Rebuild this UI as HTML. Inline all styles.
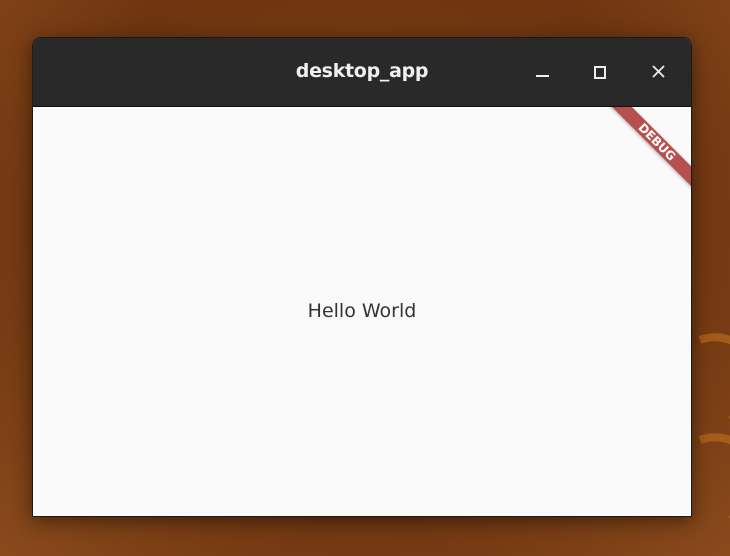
<!DOCTYPE html>
<html><head><meta charset="utf-8"><style>
html,body{margin:0;padding:0;width:730px;height:556px;overflow:hidden;}
body{background:radial-gradient(ellipse at 50% 40%,#7a3d12 0%,#6e3510 60%,#8a4a1c 100%);position:relative;font-family:"Liberation Sans","DejaVu Sans",sans-serif;}
.win{position:absolute;left:32px;top:37px;width:660px;height:480px;border-radius:9px 9px 0 0;box-shadow:0 4px 18px rgba(0,0,0,0.45);overflow:hidden;background:#fafafa;border:1px solid #1a1a1a;box-sizing:border-box;}
.tb{position:absolute;left:0;top:0;width:100%;height:68px;background:#292929;border-bottom:1px solid #111;}
.title{position:absolute;left:0;right:0;top:22px;text-align:center;color:#f0f0f0;font-weight:bold;font-size:19px;font-family:"DejaVu Sans","Liberation Sans",sans-serif;letter-spacing:-0.3px;}
.content{position:absolute;left:0;top:69px;right:0;bottom:0;background:#fafafa;overflow:hidden;}
.hello{position:absolute;left:0;right:0;top:193px;text-align:center;color:#333;font-size:19px;font-family:"DejaVu Sans","Liberation Sans",sans-serif;}
.banner{position:absolute;width:120px;height:14px;background:#b84f4f;color:#fff;font-weight:bold;font-size:12px;line-height:14px;text-align:center;left:564px;top:28px;transform:rotate(45deg);box-shadow:0 1px 3px rgba(0,0,0,0.3);font-family:"DejaVu Sans",sans-serif;}
</style></head><body>
<svg style="position:absolute;left:0;top:0" width="730" height="556">
<path d="M700 340 A40 40 0 0 1 730 420" stroke="#c0701d" stroke-width="8" fill="none" opacity="0.6"/>
<path d="M700 440 A40 40 0 0 1 730 520" stroke="#c0701d" stroke-width="8" fill="none" opacity="0.6"/>
</svg>
<div class="win">
<div class="tb">
<div class="title">desktop_app</div>
<svg style="position:absolute;left:0;top:0" width="660" height="68">
<line x1="503" y1="38" x2="516" y2="38" stroke="#eee" stroke-width="2"/>
<rect x="562" y="29" width="10" height="11" stroke="#eee" stroke-width="2" fill="none"/>
<path d="M620 28 L631 39 M631 28 L620 39" stroke="#eee" stroke-width="1.8"/>
</svg>
</div>
<div class="content">
<div class="hello">Hello World</div>
<div class="banner">DEBUG</div>
</div>
</div>
</body></html>
